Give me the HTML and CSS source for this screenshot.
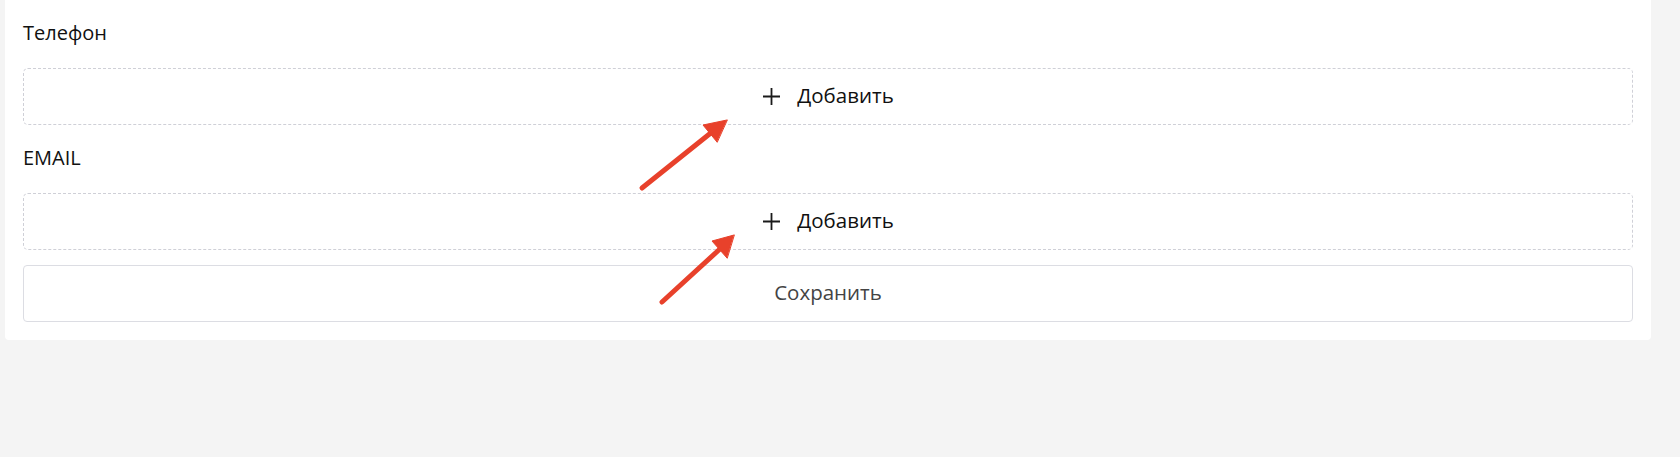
FILE: index.html
```
<!DOCTYPE html>
<html lang="ru">
<head>
  <meta charset="UTF-8" />
  <meta name="viewport" content="width=device-width, initial-scale=1.0"/>
  <title>Контакты</title>
  <link rel="stylesheet" href="styles.css">
</head>
<body>
  <div class="card">
    <div class="field">
      <div class="field-label">Телефон</div>
      <button class="add-box" type="button">
        <svg class="plus" width="19" height="19" viewBox="0 0 19 19">
          <path d="M9.5 1 V18 M1 9.5 H18" stroke="#1a1a1a" stroke-width="1.8" fill="none"/>
        </svg>
        <span>Добавить</span>
      </button>
    </div>

    <div class="field">
      <div class="field-label">EMAIL</div>
      <button class="add-box" type="button">
        <svg class="plus" width="19" height="19" viewBox="0 0 19 19">
          <path d="M9.5 1 V18 M1 9.5 H18" stroke="#1a1a1a" stroke-width="1.8" fill="none"/>
        </svg>
        <span>Добавить</span>
      </button>
    </div>

    <button class="save" type="button">Сохранить</button>
  </div>

  <!-- стрелки-пометки поверх скриншота -->
  <svg class="marks" width="1680" height="457" viewBox="0 0 1680 457">
    <g stroke="#e8412b" stroke-width="5" stroke-linecap="round" fill="#e8412b">
      <line x1="642" y1="188" x2="712" y2="132"/>
      <polygon points="727,120 703,125 717,142" stroke-linejoin="round" stroke-width="1"/>
      <line x1="662" y1="302" x2="721" y2="248"/>
      <polygon points="734,235 712,241 727,258" stroke-linejoin="round" stroke-width="1"/>
    </g>
  </svg>
</body>
</html>
```

FILE: styles.css
```
body {
  font-family: 'Open Sans', 'Noto Sans', sans-serif;
  background-color: #f4f4f4;
  margin: 0;
  position: relative;
  min-height: 457px;
}

.card {
  background: white;
  margin-left: 5px;
  width: 1646px;
  box-sizing: border-box;
  padding: 19px 18px 18px;
  border-radius: 0 0 4px 4px;
  display: flex;
  flex-direction: column;
}

.field {
  display: flex;
  flex-direction: column;
  margin-bottom: 19px;
}

.field + .field {
  margin-bottom: 15px;
}

.field-label {
  font-size: 20px;
  line-height: 28px;
  color: #111;
  margin-bottom: 21px;
}

.add-box,
.save {
  height: 57px;
  box-sizing: border-box;
  background: white;
  font-family: inherit;
  font-size: 20.5px;
  display: flex;
  align-items: center;
  justify-content: center;
  cursor: pointer;
  padding: 0 0 3px;
}

.add-box {
  border: 1px dashed #cfd0d7;
  border-radius: 5px;
  gap: 16px;
  color: #111;
}

.plus {
  margin-top: 3px;
}

.save {
  border: 1.5px solid #dcdde3;
  border-radius: 4px;
  color: #444;
}

.marks {
  position: absolute;
  top: 0;
  left: 0;
  pointer-events: none;
}
```
